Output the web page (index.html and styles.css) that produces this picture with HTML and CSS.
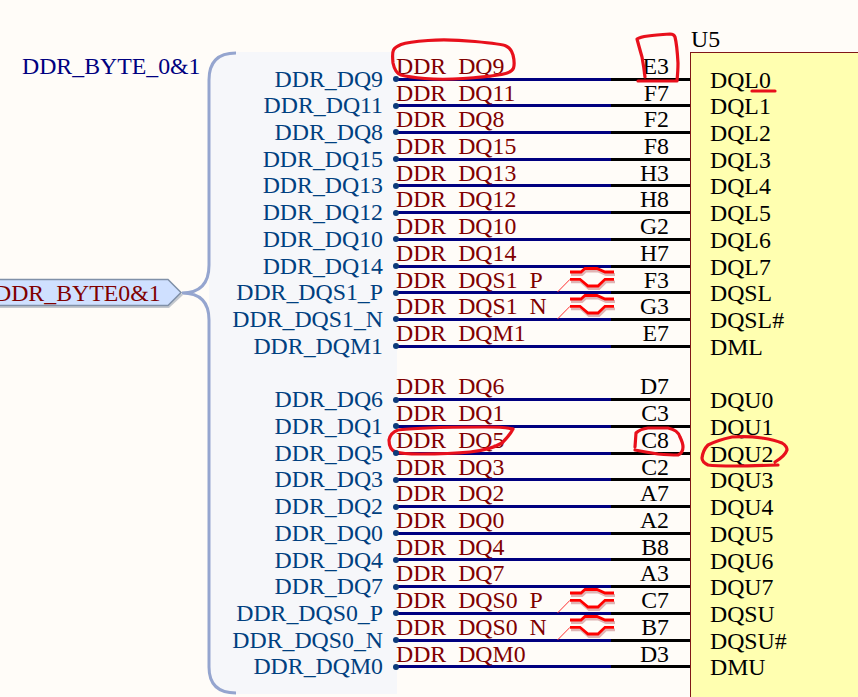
FILE: index.html
```html
<!DOCTYPE html>
<html lang="en">
<head>
<meta charset="utf-8">
<title>DDR schematic</title>
<link rel="stylesheet" href="styles.css">
</head>
<body>
<main class="sheet">
  <svg class="defs" width="0" height="0" aria-hidden="true">
    <defs>
      <g id="diff">
        <g class="diff-shadow">
          <path d="M14 5H25L29 1.5H41L49 5H58"/>
          <path d="M14 12.3H24L32 19H42L49 12.3H58"/>
        </g>
        <path class="diff-lead" d="M1.5 25L14 12.3"/>
        <g class="diff-line">
          <path d="M14 5H25L29 1.5H41L49 5H58"/>
          <path d="M14 12.3H24L32 19H42L49 12.3H58"/>
        </g>
      </g>
    </defs>
  </svg>

  <section class="bus">
    <div class="name">DDR_DQ9</div>
    <div class="name">DDR_DQ11</div>
    <div class="name">DDR_DQ8</div>
    <div class="name">DDR_DQ15</div>
    <div class="name">DDR_DQ13</div>
    <div class="name">DDR_DQ12</div>
    <div class="name">DDR_DQ10</div>
    <div class="name">DDR_DQ14</div>
    <div class="name">DDR_DQS1_P</div>
    <div class="name">DDR_DQS1_N</div>
    <div class="name">DDR_DQM1</div>
    <div class="name"></div>
    <div class="name">DDR_DQ6</div>
    <div class="name">DDR_DQ1</div>
    <div class="name">DDR_DQ5</div>
    <div class="name">DDR_DQ3</div>
    <div class="name">DDR_DQ2</div>
    <div class="name">DDR_DQ0</div>
    <div class="name">DDR_DQ4</div>
    <div class="name">DDR_DQ7</div>
    <div class="name">DDR_DQS0_P</div>
    <div class="name">DDR_DQS0_N</div>
    <div class="name">DDR_DQM0</div>
  </section>

  <section class="wires">
    <div class="wire"><span class="net">DDR<span class="us">_</span>DQ9</span><span class="pad">E3</span></div>
    <div class="wire"><span class="net">DDR<span class="us">_</span>DQ11</span><span class="pad">F7</span></div>
    <div class="wire"><span class="net">DDR<span class="us">_</span>DQ8</span><span class="pad">F2</span></div>
    <div class="wire"><span class="net">DDR<span class="us">_</span>DQ15</span><span class="pad">F8</span></div>
    <div class="wire"><span class="net">DDR<span class="us">_</span>DQ13</span><span class="pad">H3</span></div>
    <div class="wire"><span class="net">DDR<span class="us">_</span>DQ12</span><span class="pad">H8</span></div>
    <div class="wire"><span class="net">DDR<span class="us">_</span>DQ10</span><span class="pad">G2</span></div>
    <div class="wire"><span class="net">DDR<span class="us">_</span>DQ14</span><span class="pad">H7</span></div>
    <div class="wire"><span class="net">DDR<span class="us">_</span>DQS1<span class="us">_</span>P</span><svg class="diff" viewBox="0 0 60 26"><use href="#diff"/></svg><span class="pad">F3</span></div>
    <div class="wire"><span class="net">DDR<span class="us">_</span>DQS1<span class="us">_</span>N</span><svg class="diff" viewBox="0 0 60 26"><use href="#diff"/></svg><span class="pad">G3</span></div>
    <div class="wire"><span class="net">DDR<span class="us">_</span>DQM1</span><span class="pad">E7</span></div>
    <div class="wire-gap"></div>
    <div class="wire"><span class="net">DDR<span class="us">_</span>DQ6</span><span class="pad">D7</span></div>
    <div class="wire"><span class="net">DDR<span class="us">_</span>DQ1</span><span class="pad">C3</span></div>
    <div class="wire"><span class="net">DDR<span class="us">_</span>DQ5</span><span class="pad">C8</span></div>
    <div class="wire"><span class="net">DDR<span class="us">_</span>DQ3</span><span class="pad">C2</span></div>
    <div class="wire"><span class="net">DDR<span class="us">_</span>DQ2</span><span class="pad">A7</span></div>
    <div class="wire"><span class="net">DDR<span class="us">_</span>DQ0</span><span class="pad">A2</span></div>
    <div class="wire"><span class="net">DDR<span class="us">_</span>DQ4</span><span class="pad">B8</span></div>
    <div class="wire"><span class="net">DDR<span class="us">_</span>DQ7</span><span class="pad">A3</span></div>
    <div class="wire"><span class="net">DDR<span class="us">_</span>DQS0<span class="us">_</span>P</span><svg class="diff" viewBox="0 0 60 26"><use href="#diff"/></svg><span class="pad">C7</span></div>
    <div class="wire"><span class="net">DDR<span class="us">_</span>DQS0<span class="us">_</span>N</span><svg class="diff" viewBox="0 0 60 26"><use href="#diff"/></svg><span class="pad">B7</span></div>
    <div class="wire"><span class="net">DDR<span class="us">_</span>DQM0</span><span class="pad">D3</span></div>
  </section>

  <section class="chip">
    <div class="designator">U5</div>
    <div class="pin">DQL0</div>
    <div class="pin">DQL1</div>
    <div class="pin">DQL2</div>
    <div class="pin">DQL3</div>
    <div class="pin">DQL4</div>
    <div class="pin">DQL5</div>
    <div class="pin">DQL6</div>
    <div class="pin">DQL7</div>
    <div class="pin">DQSL</div>
    <div class="pin">DQSL#</div>
    <div class="pin">DML</div>
    <div class="pin"></div>
    <div class="pin">DQU0</div>
    <div class="pin">DQU1</div>
    <div class="pin">DQU2</div>
    <div class="pin">DQU3</div>
    <div class="pin">DQU4</div>
    <div class="pin">DQU5</div>
    <div class="pin">DQU6</div>
    <div class="pin">DQU7</div>
    <div class="pin">DQSU</div>
    <div class="pin">DQSU#</div>
    <div class="pin">DMU</div>
  </section>

  <svg class="overlay" viewBox="0 0 858 697" aria-hidden="true">
    <path class="brace" d="M236 53Q209 53 209 80V265Q209 293 182 293Q209 293 209 320V667Q209 693 236 693"/>
    <polygon class="port-shadow" points="-8,282 169,282 183,295 169,308 -8,308"/>
    <polygon class="port" points="-8,279.5 168,279.5 181,292.5 168,305.5 -8,305.5"/>
  </svg>

  <div class="harness">DDR_BYTE_0&amp;1</div>
  <div class="port-label">DDR_BYTE0&amp;1</div>

  <svg class="overlay ink" viewBox="0 0 858 697" aria-hidden="true">
    <path d="M393.5 50Q395 47 401 44.5Q408 42 428 40.5Q448 39 475 41.5Q502 44 506 46Q511 48 513 55Q515 63 513.5 68Q512 73 498 75Q485 77 463 78.5Q442 80 425 78.5Q408 77 401 75Q395 73 393 63Q392 53 393.5 50"/>
    <path d="M638 81H677Q678 70 678 63Q677 45 675 37Q674 34 670 34Q655 35 648 36Q640 37 637 39Q640 50 642 57Q644 68 645 77"/>
    <path d="M752 91H775"/>
    <path d="M513 429Q505 427 485 427Q450 427 428 428Q405 429 398 430Q390 433 389 440Q389 450 396 452Q402 454 420 454Q450 454 470 452Q490 450 502 443Q510 435 513 429"/>
    <path d="M635 447L636 433Q640 429 648 428H668Q678 430 680 437Q683 443 683 447Q683 453 678 455Q670 455 658 454Q645 452 635 450"/>
    <path d="M778 465Q750 466 735 466Q715 466 708 465Q702 462 702 458Q703 450 708 445Q718 440 732 437Q748 436 762 438Q775 440 782 443Q787 446 787 450Q785 456 775 462"/>
  </svg>
</main>
</body>
</html>
```

FILE: styles.css
```css
html, body {
  margin: 0;
  padding: 0;
  background: #fffcf8;
}

.sheet {
  position: relative;
  display: grid;
  grid-template-columns: 396px 295px 167px;
  align-items: start;
  width: 858px;
  height: 697px;
  overflow: hidden;
  font-family: "Liberation Serif", "Times New Roman", serif;
  font-size: 23.8px;
}

.defs {
  position: absolute;
}

/* Signal names on the harness */
.bus {
  box-sizing: border-box;
  width: 188px;
  height: 642px;
  margin: 52px -1px 0 209px;
  padding: 13.6px 14px 0 0;
  border-radius: 27px 0 0 27px;
  background: #f6f7fa;
}

.name {
  height: 26.72px;
  line-height: 26.72px;
  text-align: right;
  white-space: nowrap;
  color: #004080;
}

/* Wires between harness and part */
.wires {
  display: flex;
  flex-direction: column;
  padding-top: 53.8px;
}

.wire {
  position: relative;
  display: flex;
  height: 26.72px;
}

.wire-gap {
  height: 26.72px;
}

.wire::before {
  content: "";
  position: absolute;
  left: -3px;
  bottom: -1.5px;
  width: 6px;
  height: 6px;
  border-radius: 50%;
  background: #0b3a7a;
  z-index: 1;
}

.net,
.pad {
  box-sizing: border-box;
  height: 26.72px;
  line-height: 24.5px;
  white-space: nowrap;
  border-bottom: 3px solid;
}

.net {
  width: 215px;
  color: #800000;
  border-bottom-color: #000080;
}

/* The underscore of a net name is hidden behind its wire */
.us {
  color: transparent;
}

.pad {
  width: 80px;
  padding-right: 22px;
  text-align: right;
  color: #000;
}

.diff {
  position: absolute;
  left: 160px;
  bottom: 1px;
  width: 60px;
  height: 26px;
}

.diff-shadow {
  fill: none;
  stroke: #e0b4b4;
  stroke-width: 2.8;
  transform: translate(1px, 2.5px);
}

.diff-line {
  fill: none;
  stroke: #ff0000;
  stroke-width: 2.8;
}

.diff-lead {
  fill: none;
  stroke: #ff3030;
  stroke-width: 1;
}

/* The part */
.chip {
  position: relative;
  box-sizing: border-box;
  height: 645px;
  margin: 52px 0 0 -1px;
  padding: 13.6px 0 0 19px;
  border-top: 1px solid #801818;
  border-left: 1px solid #801818;
  background: #ffffb0;
}

.pin {
  height: 26.72px;
  line-height: 26.72px;
  white-space: nowrap;
  color: #000;
}

.designator {
  position: absolute;
  left: 0;
  bottom: 100%;
  margin-bottom: 1px;
  line-height: 26px;
  color: #000;
}

/* Graphics lying over the sheet */
.overlay {
  position: absolute;
  left: 0;
  top: 0;
  width: 858px;
  height: 697px;
  pointer-events: none;
}

.brace {
  fill: none;
  stroke: #95a5cf;
  stroke-width: 3;
}

.port {
  fill: #cfe0ff;
  stroke: #8090a8;
  stroke-width: 1.5;
}

.port-shadow {
  fill: #c4c8ce;
}

.ink path {
  fill: none;
  stroke: #e8101c;
  stroke-width: 3.2;
  stroke-linecap: round;
  stroke-linejoin: round;
}

.harness {
  position: absolute;
  left: 22px;
  top: 53px;
  line-height: 26px;
  white-space: nowrap;
  color: #000080;
}

.port-label {
  position: absolute;
  left: -6px;
  top: 280px;
  line-height: 26px;
  white-space: nowrap;
  color: #800000;
}
```
